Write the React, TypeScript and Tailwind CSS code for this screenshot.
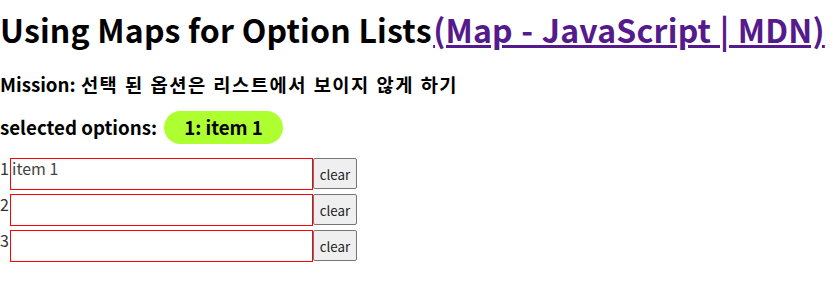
import React from 'react';

const ROWS = [
  { no: 1, value: 'item 1' },
  { no: 2, value: '' },
  { no: 3, value: '' },
];

export default function App() {
  return (
    <div className="bg-white text-black font-['Noto_Sans_CJK_KR','Liberation_Sans',sans-serif] w-[837px] h-[306px] overflow-hidden">
      {/* title + link */}
      <h1 className="text-[32px] font-bold leading-[38px] pt-[10px] whitespace-nowrap tracking-[0.2px]">
        Using Maps for Option Lists{' '}
        <a href="#" className="-ml-[6px] text-[#551a8b] underline [word-spacing:1px]">(Map - JavaScript | MDN)</a>
      </h1>
      <h3 className="text-[18.72px] font-bold leading-[24px] mt-[24px] whitespace-nowrap [word-spacing:1px]">
        Mission: <span className="tracking-[1.5px]">선택 된 옵션은 리스트에서 보이지 않게 하기</span>
      </h3>

      <h3 className="flex items-center mt-[15px] h-[33px] text-[18.72px] font-bold">
        <span>selected options:</span>
        <span className="ml-[7px] h-[33px] w-[119px] rounded-full bg-[#adff2f] flex items-center justify-center">
          1: item 1
        </span>
      </h3>

      {/* option rows */}
      <div className="mt-[14px] flex flex-col gap-[4px]">
        {ROWS.map((row) => (
          <div key={row.no} className="flex items-start">
            <span className="w-[10px] text-[16px] leading-[20px] text-[#333]">{row.no}</span>
            <div className="w-[303px] h-[32px] border border-[#ff0000] text-[16px] leading-[18px] text-[#444] pl-[1px]">
              {row.value}
            </div>
            <button className="w-[44px] h-[31px] border border-[#767676] rounded-[2px] bg-[#efefef] text-[13.33px] text-[#222] pt-[2px]">
              clear
            </button>
          </div>
        ))}
      </div>
    </div>
  );
}
